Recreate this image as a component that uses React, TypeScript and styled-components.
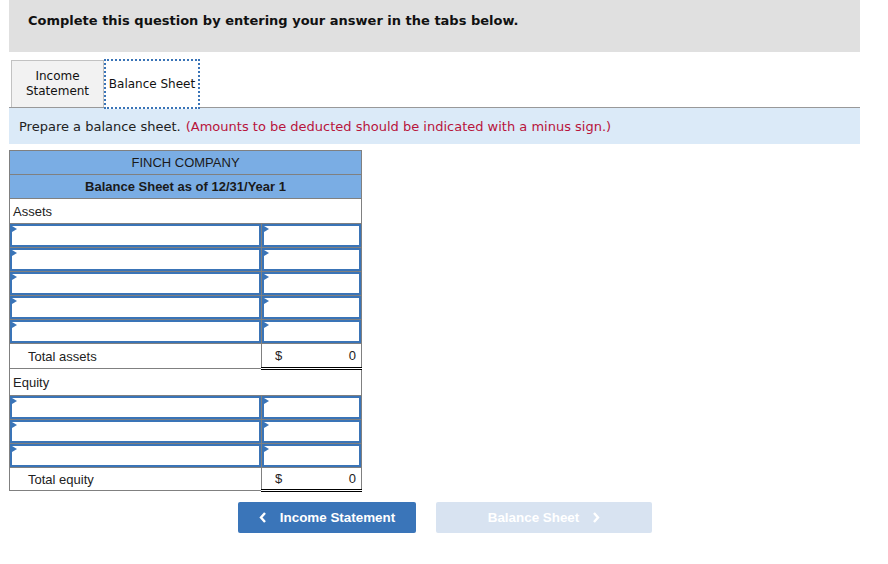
import React from "react";
import styled, { createGlobalStyle } from "styled-components";

const Global = createGlobalStyle`
  html, body { margin: 0; padding: 0; background: #fff; }
  body { font-family: "DejaVu Sans", Verdana, sans-serif; color: #000; }
`;

const Page = styled.div`
  width: 851px;
  padding-left: 9px;
`;

const Banner = styled.div`
  height: 52px;
  background: #e0e0e0;
  padding: 13px 0 0 19px;
  box-sizing: border-box;
  font-size: 13px;
  font-weight: bold;
  line-height: 16px;
  color: #111;
`;

const TabBar = styled.div`
  margin-top: 7px;
  display: flex;
  align-items: flex-end;
  border-bottom: 1px solid #999;
  height: 48px;
`;

const Tab = styled.div<{ $active?: boolean }>`
  box-sizing: border-box;
  display: flex;
  align-items: center;
  justify-content: center;
  text-align: center;
  font-size: 12px;
  line-height: 15px;
  color: #111;
  ${(p) =>
    p.$active
      ? `
    width: 96px;
    height: 50px;
    margin-bottom: -2px;
    background: #fff;
    border: 2px dotted #3a74b7;
  `
      : `
    margin-left: 2px;
    width: 93px;
    height: 47px;
    background: #f2f2f2;
    border: 1px solid #c2c2c2;
    border-bottom: none;
  `}
`;

const Instruction = styled.div`
  height: 36px;
  background: #dbeaf8;
  padding-left: 10px;
  display: flex;
  align-items: center;
  font-size: 13px;
  color: #222;
`;

const Red = styled.span`
  color: #b8143c;
  margin-left: 5px;
`;

const Sheet = styled.table`
  margin-top: 6px;
  width: 352px;
  border-collapse: collapse;
  font-family: "Liberation Sans", Arial, sans-serif;
  font-size: 13px;
  color: #222;
  table-layout: fixed;
`;

const HeadCell = styled.td<{ $bold?: boolean }>`
  background: #7aade4;
  border: 1px solid #808080;
  height: 23px;
  padding: 0;
  text-align: center;
  font-weight: ${(p) => (p.$bold ? "bold" : "normal")};
  color: #1a1a1a;
`;

const LabelCell = styled.td<{ $indent?: boolean; $h: number }>`
  border: 1px solid #808080;
  height: ${(p) => p.$h}px;
  padding: 0 0 0 ${(p) => (p.$indent ? 18 : 3)}px;
  vertical-align: middle;
`;

const InputCell = styled.td`
  border: 1px solid #808080;
  padding: 0;
  height: 23px;
`;

const Field = styled.div`
  box-sizing: border-box;
  height: 23px;
  border: 2px solid #3a74b7;
  background: #fff;
  position: relative;
  &::before {
    content: "";
    position: absolute;
    left: 0;
    top: 0;
    border-left: 5px solid #3a74b7;
    border-top: 3px solid transparent;
    border-bottom: 3px solid transparent;
  }
`;

const TotalCell = styled.td`
  border: 1px solid #808080;
  border-top: 1px solid #000;
  border-bottom: 3px double #000;
  padding: 0 5px 0 13px;
`;

const TotalInner = styled.div`
  display: flex;
  justify-content: space-between;
`;

const NavRow = styled.div`
  display: flex;
  gap: 20px;
  margin: 10px 0 0 229px;
`;

const NavButton = styled.button<{ $disabled?: boolean; $w: number }>`
  width: ${(p) => p.$w}px;
  height: 31px;
  border: none;
  border-radius: 2px;
  background: ${(p) => (p.$disabled ? "#d8e3f1" : "#3a75b9")};
  color: #fff;
  font-family: "Liberation Sans", Arial, sans-serif;
  font-weight: bold;
  font-size: 13.4px;
  display: flex;
  align-items: center;
  justify-content: center;
  gap: 13px;
  padding: 0;
`;

const Chevron = ({ dir }: { dir: "left" | "right" }) => (
  <svg width="8" height="11" viewBox="0 0 8 11">
    <polyline
      points={dir === "left" ? "6,1 2,5.5 6,10" : "2,1 6,5.5 2,10"}
      fill="none"
      stroke="#fff"
      strokeWidth="2.4"
    />
  </svg>
);

const InputRow = () => (
  <tr>
    <InputCell>
      <Field />
    </InputCell>
    <InputCell>
      <Field />
    </InputCell>
  </tr>
);

const TotalRow = ({ label, h }: { label: string; h: number }) => (
  <tr>
    <LabelCell $indent $h={h}>
      {label}
    </LabelCell>
    <TotalCell>
      <TotalInner>
        <span>$</span>
        <span>0</span>
      </TotalInner>
    </TotalCell>
  </tr>
);

export default function App() {
  return (
    <Page>
      <Global />
      <Banner>Complete this question by entering your answer in the tabs below.</Banner>
      <TabBar>
        <Tab>
          Income
          <br />
          Statement
        </Tab>
        <Tab $active>Balance Sheet</Tab>
      </TabBar>
      <Instruction>
        Prepare a balance sheet.
        <Red>(Amounts to be deducted should be indicated with a minus sign.)</Red>
      </Instruction>
      <Sheet>
        <colgroup>
          <col style={{ width: 252 }} />
          <col style={{ width: 100 }} />
        </colgroup>
        <tbody>
          <tr>
            <HeadCell colSpan={2}>FINCH COMPANY</HeadCell>
          </tr>
          <tr>
            <HeadCell colSpan={2} $bold>
              Balance Sheet as of 12/31/Year 1
            </HeadCell>
          </tr>
          <tr>
            <LabelCell colSpan={2} $h={24}>
              Assets
            </LabelCell>
          </tr>
          {[0, 1, 2, 3, 4].map((i) => (
            <InputRow key={"a" + i} />
          ))}
          <TotalRow label="Total assets" h={24} />
          <tr>
            <LabelCell colSpan={2} $h={25}>
              Equity
            </LabelCell>
          </tr>
          {[0, 1, 2].map((i) => (
            <InputRow key={"e" + i} />
          ))}
          <TotalRow label="Total equity" h={22} />
        </tbody>
      </Sheet>
      <NavRow>
        <NavButton $w={178}>
          <Chevron dir="left" />
          Income Statement
        </NavButton>
        <NavButton $w={216} $disabled>
          Balance Sheet
          <Chevron dir="right" />
        </NavButton>
      </NavRow>
    </Page>
  );
}
